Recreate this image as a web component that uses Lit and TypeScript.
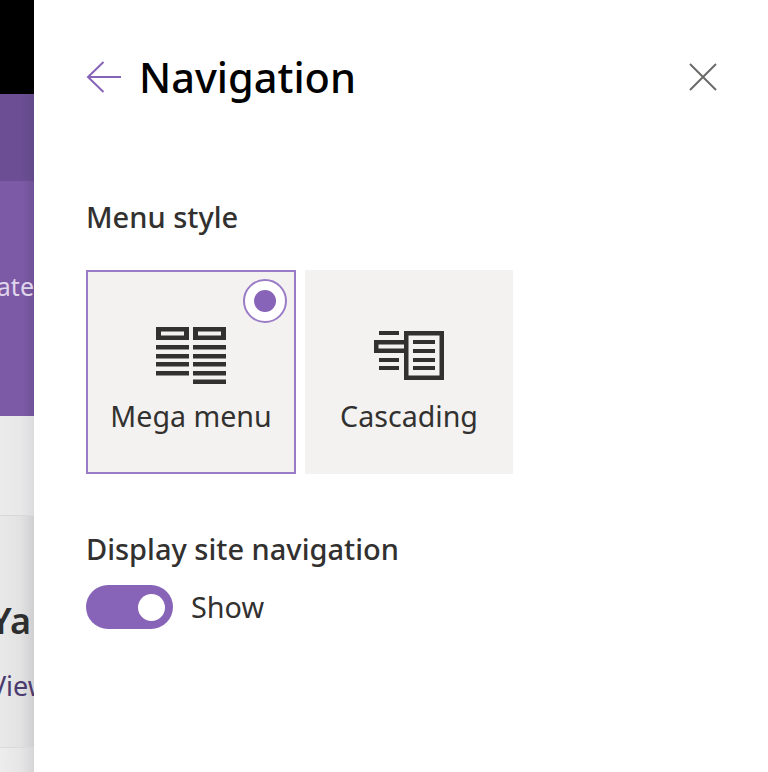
import { LitElement, html, css } from "lit";
import { customElement } from "lit/decorators.js";

@customElement("app-root")
export class AppRoot extends LitElement {
  static styles = css`
    :host { display: flex; width: 768px; height: 772px; overflow: hidden; background: #fff; font-family: "Noto Sans", "Open Sans", sans-serif; color: #323130; }
    .strip { width: 34px; flex: none; display: flex; flex-direction: column; overflow: hidden; }
    .black { height: 94px; background: #000; }
    .dark { height: 87px; background: linear-gradient(90deg, #6b4e94 0 60%, #644a8a 100%); }
    .purple { height: 235px; background: linear-gradient(90deg, #7d5aa6 0 65%, #6f5297 100%); display: flex; justify-content: flex-end; align-items: flex-start; padding-top: 88px; box-sizing: border-box; }
    .purple span { font-size: 25px; line-height: 34px; color: #e0d6ec; white-space: nowrap; }
    .light { height: 100px; background: linear-gradient(90deg, #ebebec 0, #e8e8e9 60%, #dcdcde 100%); border-bottom: 1px solid #d8d8d8; box-sizing: border-box; }
    .gray { height: 232px; background: linear-gradient(90deg, #e9e9ea 0, #e2e2e3 60%, #cfcfd1 100%); border-bottom: 1px solid #dadada; display: flex; flex-direction: column; align-items: flex-end; padding-top: 82px; box-sizing: border-box; }
    .ya { margin-right: 3px; font-size: 36px; line-height: 46px; font-weight: 600; color: #2e2e2e; white-space: nowrap; }
    .view { margin-top: 25px; margin-right: -15px; font-size: 27px; line-height: 34px; color: #4b3a6e; white-space: nowrap; }
    .bottom { flex: 1; background: linear-gradient(90deg, #ededee 0, #e6e6e7 60%, #d6d6d8 100%); }
    .panel { flex: 1; padding: 50px 50px 0 52px; box-sizing: border-box; }
    .head { display: flex; align-items: center; height: 54px; }
    .back { width: 36px; height: 32px; flex: none; margin-right: 17px; }
    h1 { flex: 1; margin: 0; font-size: 41.500px; line-height: 54px; font-weight: 500; color: #000; }
    .close { width: 30px; height: 30px; flex: none; }
    h2 { margin: 0; font-size: 29px; line-height: 36px; font-weight: 500; color: #323130; }
    .style-title { margin-top: 95px; }
    .cards { display: flex; gap: 9px; margin-top: 35px; }
    .card { position: relative; box-sizing: border-box; width: 208px; height: 204px; background: #f3f2f1; display: flex; flex-direction: column; align-items: center; padding-top: 57px; }
    .card.sel { width: 210px; border: 2px solid #9a7bc6; padding-top: 55px; }
    .card svg.ic { display: block; height: 60px; }
    .card span { margin-top: 10px; font-size: 28.600px; line-height: 38px; color: #323130; }
    .radio { position: absolute; top: 7px; right: 7px; width: 44px; height: 44px; box-sizing: border-box; border: 2px solid #9a7bc6; border-radius: 50%; background: #fff; display: flex; align-items: center; justify-content: center; }
    .radio i { width: 22px; height: 22px; border-radius: 50%; background: #8764b8; }
    .nav-title { margin-top: 57px; }
    .toggle-row { display: flex; align-items: center; gap: 18px; margin-top: 18px; }
    .toggle { width: 87px; height: 44px; border-radius: 22px; background: #8764b8; display: flex; align-items: center; justify-content: flex-end; padding-right: 8px; box-sizing: border-box; }
    .toggle i { width: 27px; height: 27px; border-radius: 50%; background: #fff; }
    .toggle-row span { font-size: 28.800px; line-height: 38px; color: #323130; }
  `;

  render() {
    return html`
      <div class="strip">
        <div class="black"></div>
        <div class="dark"></div>
        <div class="purple"><span>ate</span></div>
        <div class="light"></div>
        <div class="gray"><div class="ya">Ya</div><div class="view">View</div></div>
        <div class="bottom"></div>
      </div>
      <div class="panel">
        <div class="head">
          <svg class="back" viewBox="0 0 36 32" fill="none" stroke="#8764b8" stroke-width="2">
            <path d="M35 16H2M17.500 1 2 16l15.500 15"/>
          </svg>
          <h1>Navigation</h1>
          <svg class="close" viewBox="0 0 30 30" fill="none" stroke="#6b6a68" stroke-width="2">
            <path d="M2 2l26 26M28 2 2 28"/>
          </svg>
        </div>
        <h2 class="style-title">Menu style</h2>
        <div class="cards">
          <div class="card sel">
            <div class="radio"><i></i></div>
            <svg class="ic" width="70" height="60" viewBox="0 0 70 60" fill="#323130">
              <path fill-rule="evenodd" d="M0 0h33v13H0zM5 4.500v4h23v-4zM37 0h33v13H37zM42 4.500v4h23v-4z"/>
              <path d="M0 18h33v4.500H0zM0 27h33v4.500H0zM0 35h33v4.500H0zM0 44h33v4.500H0zM37 18h33v4.500H37zM37 27h33v4.500H37zM37 35h33v4.500H37zM37 44h33v4.500H37zM37 52.500h33v4.500H37z"/>
            </svg>
            <span>Mega menu</span>
          </div>
          <div class="card">
            <svg class="ic" width="70" height="60" viewBox="0 0 70 60" fill="#323130">
              <path fill-rule="evenodd" d="M30 4h40v49H30V26H0V13h30zM34.500 8.500v40h31v-40zM4.500 17.500v4h25.500v-4z"/>
              <path d="M5 4h20v4H5zM5 31h20v4H5zM5 39h20v4H5zM39 13h22v4H39zM39 22h22v4H39zM39 31h22v4H39zM39 39h22v4H39z"/>
            </svg>
            <span>Cascading</span>
          </div>
        </div>
        <h2 class="nav-title">Display site navigation</h2>
        <div class="toggle-row">
          <div class="toggle"><i></i></div>
          <span>Show</span>
        </div>
      </div>
    `;
  }
}
